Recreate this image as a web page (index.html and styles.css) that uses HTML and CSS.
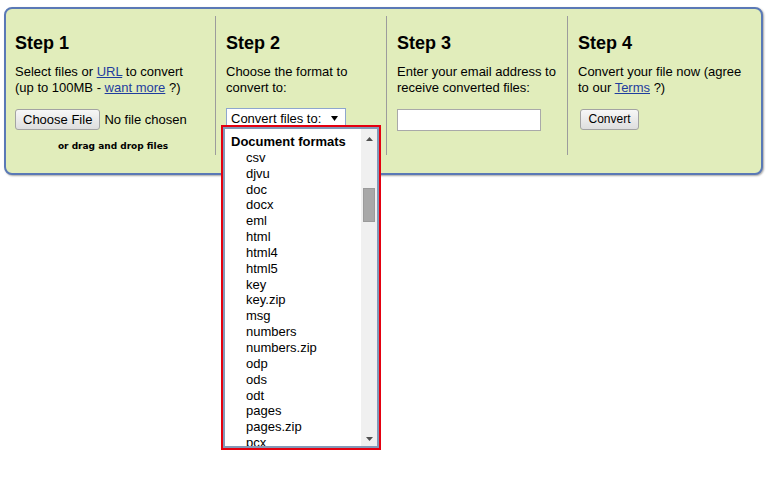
FILE: index.html
```html
<!DOCTYPE html>
<html>
<head>
<meta charset="utf-8">
<title>File converter</title>
<link rel="stylesheet" href="styles.css">
</head>
<body>
<div class="page">
<div class="panel">
  <div class="step step1">
    <h2>Step 1</h2>
    <p>Select files or <a href="#">URL</a> to convert (up to 100MB - <a href="#">want more</a> ?)</p>
    <div class="file-row"><button class="btn btn-file" type="button">Choose File</button><span class="nofile">No file chosen</span></div>
    <div class="drop">or drag and drop files</div>
  </div>
  <div class="step step2">
    <h2>Step 2</h2>
    <p>Choose the format to convert to:</p>
    <div class="select-wrap">
      <div class="select"><span>Convert files to:</span><svg class="sel-arrow" width="7" height="5" viewBox="0 0 7 5"><polygon points="0,0 7,0 3.5,5" fill="#000"/></svg></div>
      <div class="listbox">
        <div class="listbox-inner">
          <div class="list">
            <div class="group">Document formats</div>
            <div class="opt">csv</div>
            <div class="opt">djvu</div>
            <div class="opt">doc</div>
            <div class="opt">docx</div>
            <div class="opt">eml</div>
            <div class="opt">html</div>
            <div class="opt">html4</div>
            <div class="opt">html5</div>
            <div class="opt">key</div>
            <div class="opt">key.zip</div>
            <div class="opt">msg</div>
            <div class="opt">numbers</div>
            <div class="opt">numbers.zip</div>
            <div class="opt">odp</div>
            <div class="opt">ods</div>
            <div class="opt">odt</div>
            <div class="opt">pages</div>
            <div class="opt">pages.zip</div>
            <div class="opt">pcx</div>
          </div>
          <div class="scrollbar">
            <div class="sb-btn"><svg width="7" height="4" viewBox="0 0 7 4"><polygon points="0,4 3.5,0 7,4" fill="#505050"/></svg></div>
            <div class="sb-track"><div class="sb-thumb"></div></div>
            <div class="sb-btn"><svg width="7" height="4" viewBox="0 0 7 4"><polygon points="0,0 7,0 3.5,4" fill="#505050"/></svg></div>
          </div>
        </div>
      </div>
    </div>
  </div>
  <div class="step step3">
    <h2>Step 3</h2>
    <p>Enter your email address to receive converted files:</p>
    <input class="email" type="text">
  </div>
  <div class="step step4">
    <h2>Step 4</h2>
    <p>Convert your file now (agree to our <a href="#">Terms</a> ?)</p>
    <button class="btn btn-convert" type="button">Convert</button>
  </div>
</div>
</div>
</body>
</html>
```
FILE: styles.css
```css
html, body {
  margin: 0;
  padding: 0;
  background: #ffffff;
}
body {
  font-family: "Liberation Sans", Arial, sans-serif;
  font-size: 13px;
  color: #000;
}
.page {
  min-height: 502px;
  padding-top: 7px;
  box-sizing: border-box;
}
.panel {
  margin: 0 0 0 4px;
  width: 759px;
  box-sizing: border-box;
  border: 2px solid #5a79b6;
  border-radius: 8px;
  background: #e1edbb;
  padding: 7px 0 18px;
  display: flex;
  box-shadow: 1px 1px 2px rgba(0, 0, 0, 0.35);
  position: relative;
}
.step {
  height: 139px;
  box-sizing: border-box;
  padding: 16px 10px 0 10px;
  border-left: 1px solid #9c9c9c;
}
.step1 { width: 209px; border-left: none; padding-left: 9px; padding-right: 14px; }
.step2 { width: 171px; }
.step3 { width: 181px; }
.step4 { width: 194px; }
h2 {
  margin: 0;
  font-size: 18px;
  line-height: 22px;
  font-weight: bold;
}
p {
  margin: 10px 0 0;
  line-height: 16px;
}
a {
  color: #1f3d9e;
  text-decoration: underline;
}
.file-row {
  margin-top: 13px;
  display: flex;
  align-items: center;
}
.btn {
  font-family: "Liberation Sans", Arial, sans-serif;
  height: 21px;
  box-sizing: border-box;
  border: 1px solid #a3a3a3;
  border-radius: 3px;
  background: linear-gradient(#f7f7f7, #dedede);
  color: #000;
  margin: 0;
  line-height: 19px;
}
.btn-file {
  font-size: 13px;
  padding: 0 7px;
}
.nofile {
  margin-left: 4px;
  line-height: 16px;
}
.drop {
  margin-top: 10px;
  width: 196px;
  text-align: center;
  font-family: "DejaVu Sans", Verdana, sans-serif;
  font-weight: bold;
  font-size: 9px;
  line-height: 12px;
}
.select-wrap {
  position: relative;
  width: 120px;
  margin-top: 12px;
}
.select {
  height: 21px;
  box-sizing: border-box;
  border: 1px solid #8ea6ce;
  background: #fff;
  padding: 0 7px 0 4px;
  display: flex;
  align-items: center;
  justify-content: space-between;
  line-height: 19px;
}
.sel-arrow { display: block; }
.listbox {
  position: absolute;
  left: -5px;
  top: 17px;
  width: 160px;
  height: 325px;
  box-sizing: border-box;
  border: 2px solid #e5000f;
  z-index: 5;
}
.listbox-inner {
  height: 100%;
  box-sizing: border-box;
  border: 2px solid #8299b8;
  background: #fff;
  display: flex;
}
.list {
  flex: 1;
  overflow: hidden;
  padding-top: 5px;
  line-height: 15.85px;
}
.group {
  font-weight: bold;
  padding-left: 6px;
}
.opt {
  padding-left: 21px;
}
.scrollbar {
  width: 16px;
  background: #f0f0f0;
  display: flex;
  flex-direction: column;
}
.sb-btn {
  height: 17px;
  box-sizing: border-box;
  padding-top: 2px;
  display: flex;
  align-items: center;
  justify-content: center;
}
.sb-btn svg { display: block; }
.sb-track {
  flex: 1;
}
.sb-thumb {
  margin: 42px 2px 0;
  height: 34px;
  box-sizing: border-box;
  background: #a8a8a8;
  border: 1px solid #9b9b9b;
}
.email {
  display: block;
  margin: 13px 0 0;
  width: 144px;
  height: 22px;
  box-sizing: border-box;
  border: 1px solid #a9a9a9;
  background: #fff;
  padding: 0 3px;
}
.btn-convert {
  display: block;
  margin: 13px 0 0 2px;
  font-size: 12px;
  padding: 0 7px;
  width: 59px;
}
```
